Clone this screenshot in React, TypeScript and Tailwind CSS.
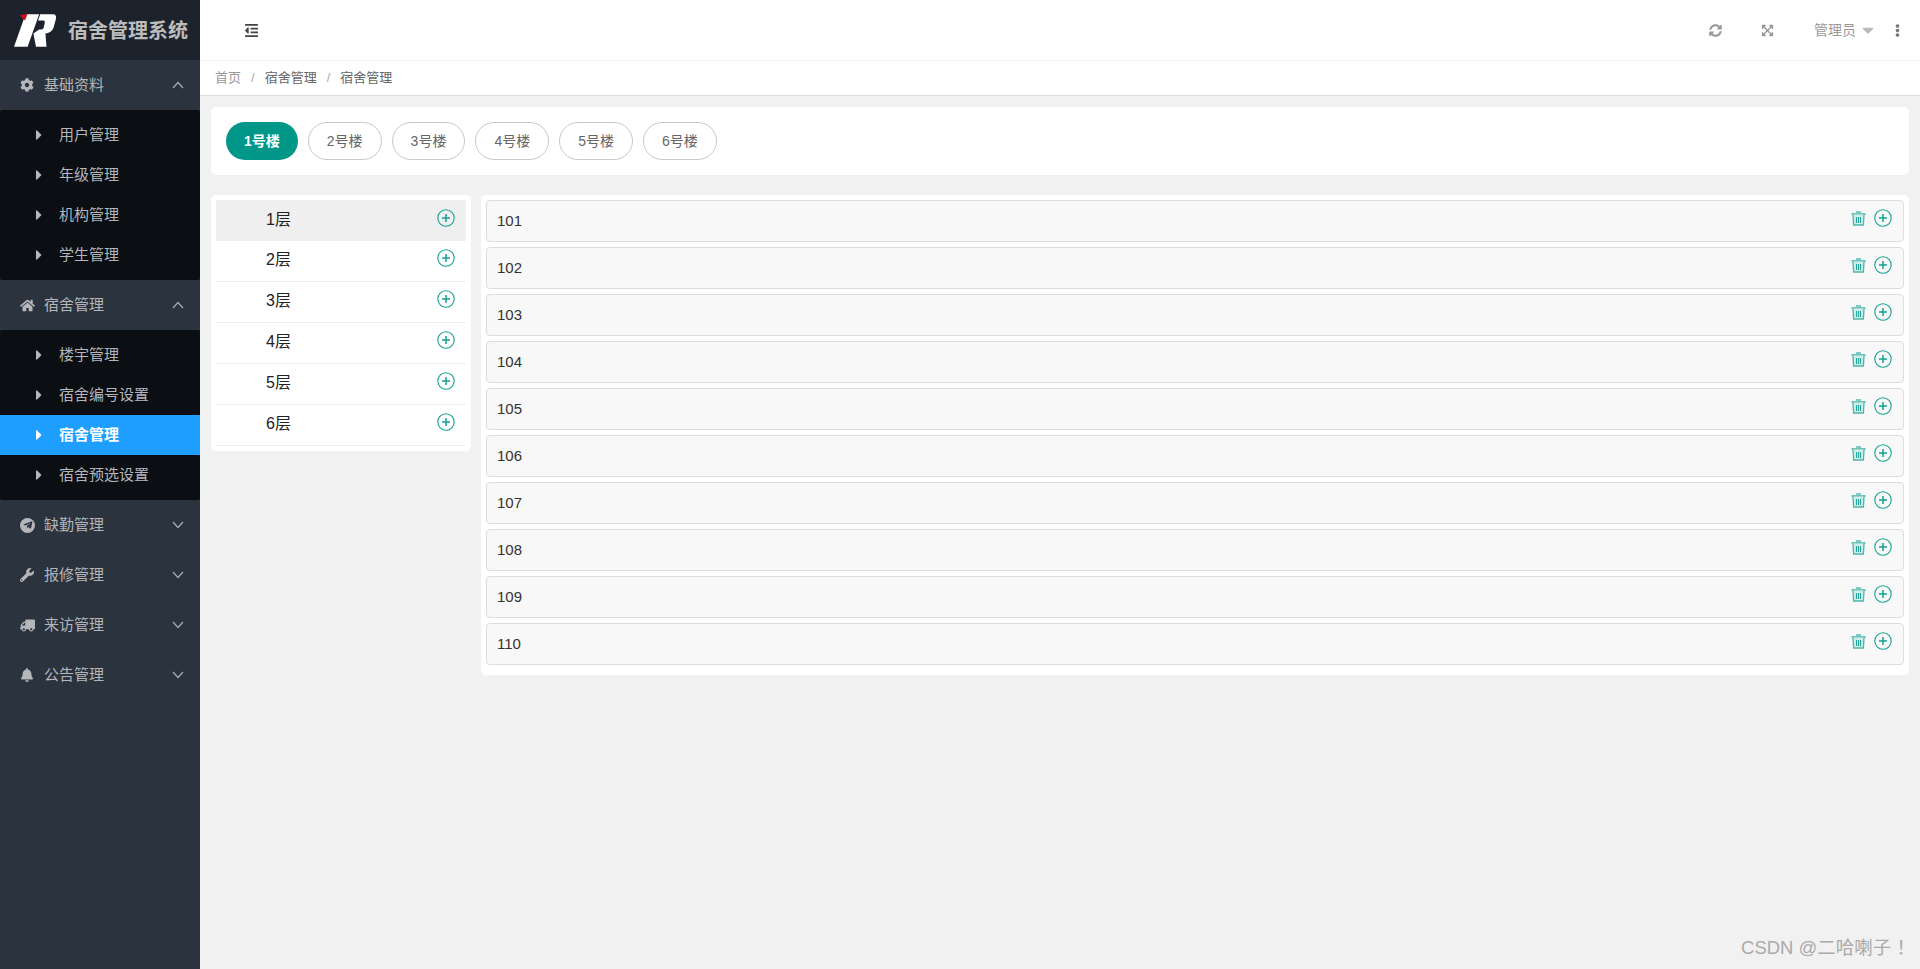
import React from "react";
import { FaCog, FaHome, FaTelegramPlane, FaWrench, FaTruck, FaBell, FaCaretRight, FaCaretDown, FaSyncAlt, FaExpandArrowsAlt, FaEllipsisV, FaOutdent } from "react-icons/fa";

const font = { fontFamily: '"Liberation Sans","Noto Sans CJK SC",sans-serif' };

function Chevron({ up }: { up?: boolean }) {
  return (
    <svg width="12" height="8" viewBox="0 0 12 8" fill="none" stroke="#a9adb2" strokeWidth="1.2">
      <polyline points={up ? "1,7 6,1.5 11,7" : "1,1 6,6.5 11,1"} />
    </svg>
  );
}

function PlusCircle({ size = 18 }: { size?: number }) {
  return (
    <svg width={size} height={size} viewBox="0 0 18 18" fill="none" stroke="#14a091" className="shrink-0">
      <circle cx="9" cy="9" r="8.2" strokeWidth="1.1" />
      <path d="M9 5v8M5 9h8" strokeWidth="1.5" />
    </svg>
  );
}

function Trash() {
  return (
    <svg width="15" height="15" viewBox="0 0 15 15" fill="none" stroke="#4db6ac" className="shrink-0">
      <path d="M5 1h5" strokeWidth="1.4" />
      <path d="M0.5 3h14" strokeWidth="1.6" />
      <path d="M2 3.5l.6 10.5h9.8l.6-10.5" strokeWidth="1.3" fill="#d2ecea" />
      <path d="M5.5 6v6M7.5 6v6M9.5 6v6" strokeWidth="1.1" stroke="#26a69a" />
    </svg>
  );
}

function Logo() {
  return (
    <svg width="44" height="38" viewBox="0 0 42 36" className="shrink-0">
      <path d="M11 2H24L13 33H0Z" fill="#fff" />
      <path d="M25 2H37C40 2 40.5 4 40 6.5L38 14C37 18 34 20 30 20.5L31 33H21L18.5 20.5L24 16.5H26C27.5 16.5 28 16 28.4 14.5L29.4 10C29.6 9 29.2 8 28 8H23Z" fill="#fff" />
      <path d="M5.5 3L13 1.5L10.5 8Z" fill="#c8101a" />
    </svg>
  );
}

function SideParent({ icon, label, up }: { icon: React.ReactNode; label: string; up?: boolean }) {
  return (
    <div className="flex h-[50px] items-center pl-5 pr-[16px] text-[15px] text-[#b4b6b9]">
      <span className="flex w-[24px] items-center">{icon}</span>
      <span className="flex-1">{label}</span>
      <Chevron up={up} />
    </div>
  );
}

function SideSub({ items, active }: { items: string[]; active?: string }) {
  return (
    <div className="rounded-[2px] bg-[#0b0e13] py-[5px]">
      {items.map((t) => (
        <div
          key={t}
          className={
            t === active
              ? "flex h-10 items-center pl-[31px] text-[15px] font-bold text-white bg-[#1e9fff]"
              : "flex h-10 items-center pl-[31px] text-[15px] text-[#b4b6b9]"
          }
        >
          <span className="flex w-[28px] items-center">
            <FaCaretRight size={16} />
          </span>
          {t}
        </div>
      ))}
    </div>
  );
}

const buildings = ["1号楼", "2号楼", "3号楼", "4号楼", "5号楼", "6号楼"];
const floors = ["1层", "2层", "3层", "4层", "5层", "6层"];
const rooms = ["101", "102", "103", "104", "105", "106", "107", "108", "109", "110"];

export default function App() {
  return (
    <div className="relative flex h-[969px] overflow-hidden bg-[#f1f1f1]" style={font}>
      <aside className="flex w-[200px] shrink-0 flex-col bg-[#2a333e]">
        <div className="flex h-[60px] items-center gap-[10px] bg-[#1c232d] pl-[14px] pt-[1px]">
          <Logo />
          <span className="text-[20px] font-bold text-[#bcbcbc]">宿舍管理系统</span>
        </div>
        <SideParent icon={<FaCog size={14} />} label="基础资料" up />
        <SideSub items={["用户管理", "年级管理", "机构管理", "学生管理"]} />
        <SideParent icon={<FaHome size={15} />} label="宿舍管理" up />
        <SideSub items={["楼宇管理", "宿舍编号设置", "宿舍管理", "宿舍预选设置"]} active="宿舍管理" />
        <SideParent
          icon={
            <span className="flex h-[15px] w-[15px] items-center justify-center rounded-full bg-[#b4b6b9]">
              <FaTelegramPlane size={10} className="text-[#2a333e]" />
            </span>
          }
          label="缺勤管理"
        />
        <SideParent icon={<FaWrench size={14} />} label="报修管理" />
        <SideParent icon={<FaTruck size={15} className="-scale-x-100" />} label="来访管理" />
        <SideParent icon={<FaBell size={14} />} label="公告管理" />
      </aside>

      <main className="flex min-w-0 flex-1 flex-col">
        <header className="flex h-[61px] items-center border-b border-[#f4f4f4] bg-white pl-[44px] pr-[16px]">
          <FaOutdent size={15} className="text-[#444]" />
          <div className="flex-1" />
          <FaSyncAlt size={13} className="text-[#999]" />
          <FaExpandArrowsAlt size={13} className="ml-[39px] text-[#999]" />
          <span className="ml-[40px] text-[14px] text-[#999]">管理员</span>
          <FaCaretDown size={18} className="ml-[3px] text-[#bbb]" />
          <FaEllipsisV size={13} className="ml-[14px] text-[#777]" />
        </header>
        <div className="flex h-[35px] items-center gap-[10px] border-b border-[#ddd] bg-white pl-[15px] text-[13px] text-[#666]">
          <span className="text-[#999]">首页</span>
          <span className="text-[#aaa]">/</span>
          <span>宿舍管理</span>
          <span className="text-[#aaa]">/</span>
          <span>宿舍管理</span>
        </div>

        <div className="flex flex-1 flex-col gap-5 px-[11px] pt-[11px]">
          <div className="flex h-[68px] items-center gap-[10px] rounded-[5px] bg-white pl-[15px]">
            {buildings.map((b, i) => (
              <div
                key={b}
                className={
                  i === 0
                    ? "flex h-[38px] items-center rounded-full bg-[#009688] px-[18px] text-[14px] font-bold text-white"
                    : "flex h-[38px] items-center rounded-full border border-[#c9c9c9] bg-white px-[18px] text-[14px] text-[#666]"
                }
              >
                {b}
              </div>
            ))}
          </div>

          <div className="flex items-start gap-[10px]">
            <div className="w-[260px] shrink-0 rounded-[5px] bg-white p-[5px]">
              {floors.map((f, i) => (
                <div
                  key={f}
                  className={
                    i === 0
                      ? "flex h-[41px] items-center justify-between bg-[#efefef] pl-[50px] pr-[11px] text-[16px] text-[#222]"
                      : "flex h-[41px] items-center justify-between border-b border-[#eee] pl-[50px] pr-[11px] text-[16px] text-[#222]"
                  }
                >
                  <span className="-translate-y-[1px]">{f}</span>
                  <span className="-translate-y-[3px]">
                    <PlusCircle />
                  </span>
                </div>
              ))}
            </div>

            <div className="flex flex-1 flex-col gap-[5px] rounded-[5px] bg-white px-[5px] pb-[10px] pt-[5px]">
              {rooms.map((r) => (
                <div
                  key={r}
                  className="flex h-[42px] items-center rounded-[4px] border border-[#ddd] bg-[#f8f8f8] pl-[10px] pr-[11px] text-[15px] text-[#333]"
                >
                  <span className="flex-1">{r}</span>
                  <span className="flex -translate-y-[3px] items-center gap-[8px]">
                    <Trash />
                    <PlusCircle />
                  </span>
                </div>
              ))}
            </div>
          </div>
        </div>
      </main>

      <div className="absolute bottom-[7px] right-[5px] text-[18.5px] text-[#aaa]">CSDN @二哈喇子 ！</div>
    </div>
  );
}
